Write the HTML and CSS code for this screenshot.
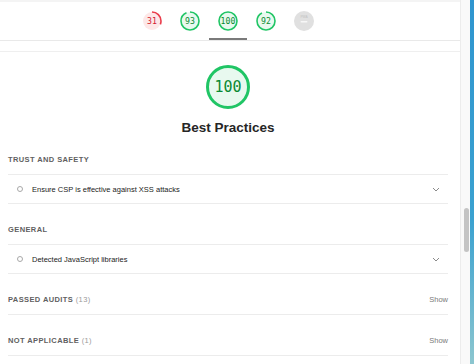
FILE: index.html
```html
<!DOCTYPE html>
<html lang="en">
<head>
<meta charset="utf-8">
<title>Lighthouse Report – Best Practices</title>
<link rel="stylesheet" href="styles.css">
</head>
<body>
<div class="window">
  <div class="report">
    <header class="topbar">
      <nav class="gauges">
        <a class="tab">
          <svg class="gauge-sm fail" viewBox="0 0 20 20">
            <circle class="fill" cx="10" cy="10" r="9"/>
            <circle class="arc" cx="10" cy="10" r="9" stroke-dasharray="17.5 60" transform="rotate(-90 10 10)"/>
            <text class="num" x="10" y="13.2">31</text>
          </svg>
        </a>
        <a class="tab">
          <svg class="gauge-sm pass" viewBox="0 0 20 20">
            <circle class="fill" cx="10" cy="10" r="9"/>
            <circle class="arc" cx="10" cy="10" r="9" stroke-dasharray="52.6 60" transform="rotate(-90 10 10)"/>
            <text class="num" x="10" y="13.2">93</text>
          </svg>
        </a>
        <a class="tab active">
          <svg class="gauge-sm pass" viewBox="0 0 20 20">
            <circle class="fill" cx="10" cy="10" r="9"/>
            <circle class="arc" cx="10" cy="10" r="9" stroke-dasharray="60 60" transform="rotate(-90 10 10)"/>
            <text class="num" x="10" y="13.2">100</text>
          </svg>
        </a>
        <a class="tab">
          <svg class="gauge-sm pass" viewBox="0 0 20 20">
            <circle class="fill" cx="10" cy="10" r="9"/>
            <circle class="arc" cx="10" cy="10" r="9" stroke-dasharray="52 60" transform="rotate(-90 10 10)"/>
            <text class="num" x="10" y="13.2">92</text>
          </svg>
        </a>
        <a class="tab">
          <svg class="gauge-sm pwa" viewBox="0 0 20 20">
            <circle class="fill" cx="10" cy="10" r="10"/>
            <text class="pwa-label" x="10" y="7.2">PWA</text>
            <rect class="pwa-dash" x="6.5" y="10" width="7" height="1.6" rx="0.8"/>
          </svg>
        </a>
      </nav>
    </header>
    <div class="topbar-gap"></div>

    <section class="category">
      <div class="category-header">
        <svg class="gauge-lg pass" viewBox="0 0 44 44">
          <circle class="fill" cx="22" cy="22" r="20.5"/>
          <circle class="arc" cx="22" cy="22" r="20.5"/>
          <text class="num" x="22" y="27.2">100</text>
        </svg>
        <h2 class="category-title">Best Practices</h2>
      </div>

      <div class="group">
        <div class="group-title">Trust and Safety</div>
        <div class="audit">
          <span class="audit-icon"></span>
          <span class="audit-text">Ensure CSP is effective against XSS attacks</span>
          <svg class="chevron" viewBox="0 0 8 5"><path d="M1 1l3 3 3-3"/></svg>
        </div>
      </div>

      <div class="group">
        <div class="group-title">General</div>
        <div class="audit">
          <span class="audit-icon"></span>
          <span class="audit-text">Detected JavaScript libraries</span>
          <svg class="chevron" viewBox="0 0 8 5"><path d="M1 1l3 3 3-3"/></svg>
        </div>
      </div>

      <div class="group">
        <div class="group-title">
          <span>Passed audits <span class="count">(13)</span></span>
          <span class="show">Show</span>
        </div>
      </div>

      <div class="group">
        <div class="group-title">
          <span>Not applicable <span class="count">(1)</span></span>
          <span class="show">Show</span>
        </div>
      </div>
    </section>
  </div>

  <div class="scrollbar"><div class="thumb"></div></div>
  <div class="desktop-edge"></div>
</div>
</body>
</html>
```

FILE: styles.css
```css
* {
  box-sizing: border-box;
}

html, body {
  margin: 0;
  padding: 0;
  background: #fff;
}

body {
  font-family: "Liberation Sans", Arial, sans-serif;
  color: #212121;
}

.window {
  display: flex;
  width: 474px;
  height: 364px;
  overflow: hidden;
}

.report {
  width: 460px;
  flex: none;
}

/* sticky score bar */
.topbar {
  height: 41px;
  border-top: 2px solid #f4f4f4;
  border-bottom: 1px solid #e9e9e9;
}

.gauges {
  display: flex;
  justify-content: center;
  padding-right: 4px;
}

.tab {
  display: flex;
  justify-content: center;
  width: 38px;
  height: 38px;
  padding-top: 9px;
}

.tab.active {
  border-bottom: 2px solid #7a7a7a;
}

.gauge-sm {
  width: 20px;
  height: 20px;
  display: block;
}

.gauge-sm .arc {
  fill: none;
  stroke-width: 1.6;
  stroke-linecap: butt;
}

.num {
  font-family: "DejaVu Sans Mono", "Liberation Mono", monospace;
  text-anchor: middle;
}

.gauge-sm .num {
  font-size: 8.2px;
}

.pass .fill { fill: #e8f9ef; }
.pass .arc { stroke: #20c565; }
.pass .num { fill: #0a8a33; }

.fail .fill { fill: #fde8e8; }
.fail .arc { stroke: #ea3c4b; }
.fail .num { fill: #d3202f; }

.pwa .fill { fill: #e0e0e0; }
.pwa-label {
  font-family: "Liberation Sans", Arial, sans-serif;
  font-size: 3.2px;
  fill: #c2c2c2;
  text-anchor: middle;
}
.pwa-dash { fill: #f7f7f7; }

.topbar-gap {
  height: 10px;
}

/* category */
.category {
  border-top: 1px solid #efefef;
  padding: 13px 12px 0 8px;
}

.category-header {
  display: flex;
  flex-direction: column;
  align-items: center;
}

.gauge-lg {
  display: block;
  width: 44px;
  height: 44px;
}

.gauge-lg .arc {
  fill: none;
  stroke-width: 3;
}

.gauge-lg .num {
  font-size: 15px;
}

.category-title {
  margin: 9px 0 0;
  font-size: 13.5px;
  line-height: 20px;
  font-weight: 700;
  color: #262626;
}

.group {
  padding-top: 11px;
}

.group:nth-child(2) {
  padding-top: 7px;
}

.group-title {
  display: flex;
  align-items: center;
  justify-content: space-between;
  height: 30px;
  border-bottom: 1px solid #ececec;
  font-size: 7.5px;
  font-weight: 700;
  letter-spacing: 0.4px;
  text-transform: uppercase;
  color: #5f5f5f;
}

.count {
  font-weight: 400;
  color: #9a9a9a;
}

.show {
  font-weight: 400;
  text-transform: none;
  letter-spacing: 0;
  color: #7a7a7a;
}

.audit {
  display: flex;
  align-items: center;
  height: 29px;
  border-bottom: 1px solid #ececec;
  padding: 0 8px 0 9px;
}

.audit-icon {
  width: 6px;
  height: 6px;
  border: 1px solid #a8a8a8;
  border-radius: 50%;
  flex: none;
}

.audit-text {
  margin-left: 9px;
  flex: 1;
  font-size: 7.5px;
  color: #222;
}

.chevron {
  width: 8px;
  height: 5px;
  fill: none;
  stroke: #8a8a8a;
  stroke-width: 1;
}

/* window scrollbar */
.scrollbar {
  width: 10px;
  flex: none;
  background: #f9f9f9;
  border-left: 1px solid #ececec;
  padding: 208px 0 0 3px;
}

.thumb {
  width: 5px;
  height: 44px;
  border-radius: 3px;
  background: #c4c4c4;
}

.desktop-edge {
  width: 4px;
  flex: none;
  background: linear-gradient(#2f95cf, #3aa1d0 60%, #8cc6cf);
}
```
